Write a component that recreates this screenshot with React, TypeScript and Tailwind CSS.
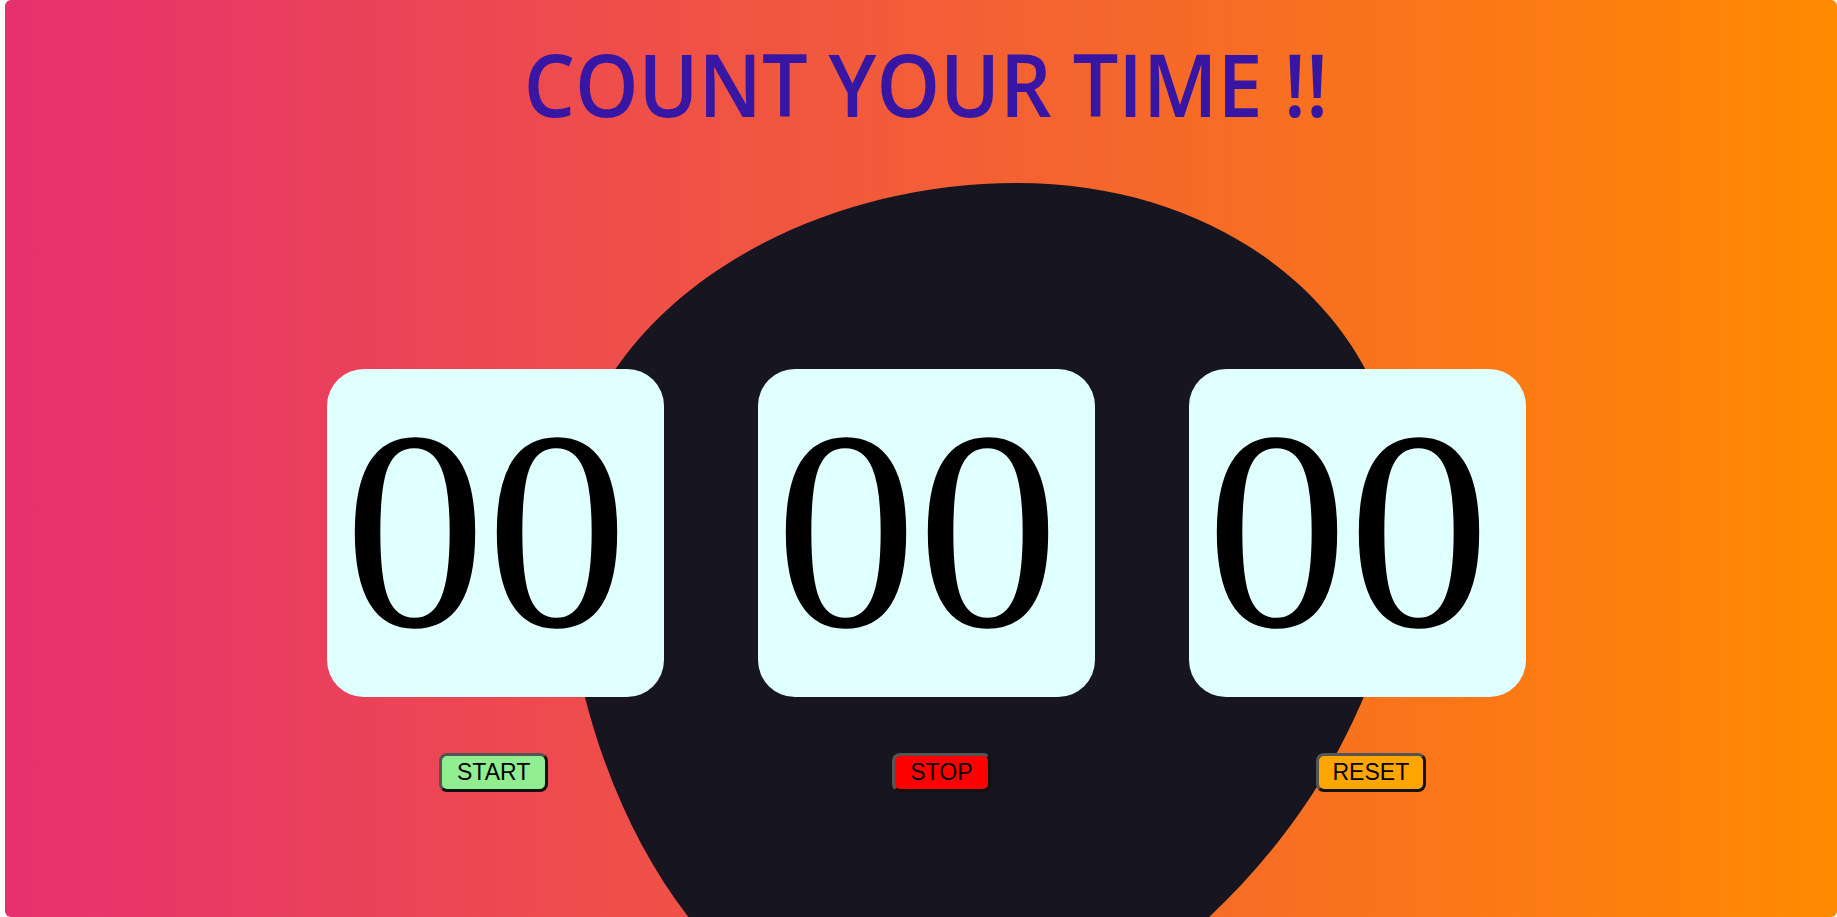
import { useState, useEffect } from 'react';

const pad = (n: number) => n.toString().padStart(2, '0');

export default function App() {
  const [seconds, setSeconds] = useState(0);
  const [running, setRunning] = useState(false);

  useEffect(() => {
    if (!running) return;
    const id = setInterval(() => setSeconds(s => s + 1), 1000);
    return () => clearInterval(id);
  }, [running]);

  const hours = Math.floor(seconds / 3600);
  const minutes = Math.floor((seconds % 3600) / 60);
  const secs = seconds % 60;

  const boxes = [pad(hours), pad(minutes), pad(secs)];

  return (
    <main className="min-h-screen bg-white">
      <div className="relative ml-[5px] h-[917px] overflow-hidden rounded-[6px] bg-linear-to-r/srgb from-[#e6306f] to-[#ff8a00]">
        {/* blob behind the timer */}
        <svg className="absolute inset-0" width="1832" height="917" viewBox="5 0 1832 917">
          <path
            d="M 1017 183 C 1240 183, 1405 330, 1402 520 C 1402 740, 1205 1000, 950 1060 C 740 1060, 575 830, 562 540 C 560 330, 780 183, 1017 183 Z"
            fill="#17151f"
          />
        </svg>

        <div className="relative flex flex-col items-center pl-[10px]">
          <h1 className="mt-[25px] h-[118px] scale-x-[0.94] font-['Open_Sans',sans-serif] text-[86px] font-semibold leading-[118px] whitespace-nowrap text-[#3816a4]">
            COUNT YOUR TIME !!
          </h1>

          <div className="mt-[226px] flex gap-[94px]">
            {boxes.map((v, i) => (
              <div
                key={i}
                className="flex h-[328px] w-[337px] items-center justify-center rounded-[37px] bg-[#e0ffff] pr-[18px] pb-[7px]"
              >
                <span className="font-['Liberation_Serif',serif] text-[284px] leading-none text-black">{v}</span>
              </div>
            ))}
          </div>
        </div>

        <div className="relative mt-[56px] flex pl-[434px] font-['Liberation_Sans',Arial,sans-serif] text-[23px] leading-[normal] text-black">
          <button
            onClick={() => setRunning(true)}
            className="rounded-[8px] border-[3px] border-[#555] border-r-[#111] border-b-[#111] bg-[#90ee90] px-[15px] py-[3px]"
          >
            START
          </button>
          <button
            onClick={() => setRunning(false)}
            className="ml-[344px] rounded-[8px] border-[3px] border-[#555] border-r-[#111] border-b-[#111] bg-[#ff0000] px-[15px] py-[3px]"
          >
            STOP
          </button>
          <button
            onClick={() => { setRunning(false); setSeconds(0); }}
            className="ml-[325px] rounded-[8px] border-[3px] border-[#555] border-r-[#111] border-b-[#111] bg-[#ffa500] px-[14px] py-[3px]"
          >
            RESET
          </button>
        </div>
      </div>
    </main>
  );
}
